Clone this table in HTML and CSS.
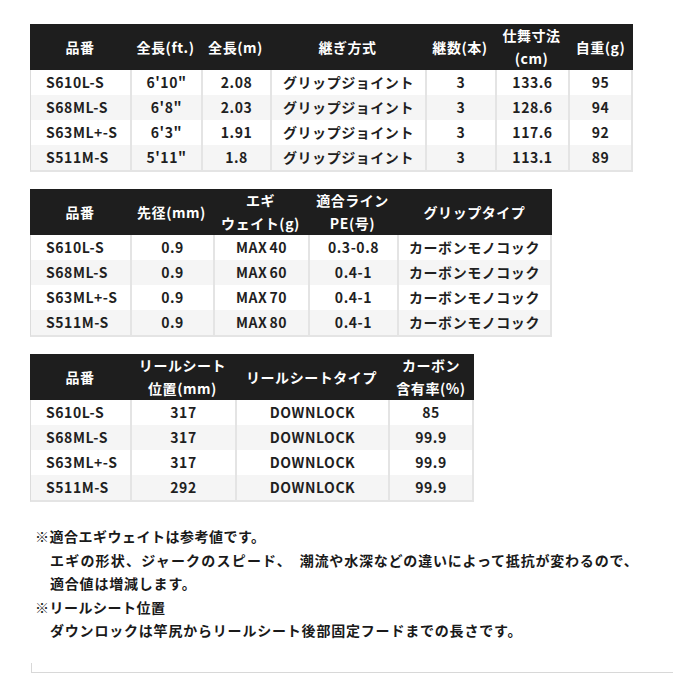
FILE: index.html
```html
<!DOCTYPE html>
<html lang="ja">
<head>
<meta charset="utf-8">
<title>スペック表</title>
<link rel="stylesheet" href="styles.css">
</head>
<body>
<div class="page">
  <table class="spec t1">
    <colgroup>
      <col class="w100"><col class="w71"><col class="w69"><col class="w155"><col class="w70"><col class="w73"><col class="w65">
    </colgroup>
    <thead>
      <tr><th>品番</th><th>全長(ft.)</th><th>全長(m)</th><th>継ぎ方式</th><th>継数(本)</th><th>仕舞寸法<br>(cm)</th><th>自重(g)</th></tr>
    </thead>
    <tbody>
      <tr><td>S610L-S</td><td>6'10"</td><td>2.08</td><td>グリップジョイント</td><td>3</td><td>133.6</td><td>95</td></tr>
      <tr><td>S68ML-S</td><td>6'8"</td><td>2.03</td><td>グリップジョイント</td><td>3</td><td>128.6</td><td>94</td></tr>
      <tr><td>S63ML+-S</td><td>6'3"</td><td>1.91</td><td>グリップジョイント</td><td>3</td><td>117.6</td><td>92</td></tr>
      <tr><td>S511M-S</td><td>5'11"</td><td>1.8</td><td>グリップジョイント</td><td>3</td><td>113.1</td><td>89</td></tr>
    </tbody>
  </table>

  <table class="spec t2">
    <colgroup>
      <col class="w100"><col class="w83"><col class="w95"><col class="w89"><col class="w155">
    </colgroup>
    <thead>
      <tr><th>品番</th><th>先径(mm)</th><th>エギ<br>ウェイト(g)</th><th>適合ライン<br>PE(号)</th><th>グリップタイプ</th></tr>
    </thead>
    <tbody>
      <tr><td>S610L-S</td><td>0.9</td><td>MAX<span class="thin"> </span>40</td><td>0.3-0.8</td><td>カーボンモノコック</td></tr>
      <tr><td>S68ML-S</td><td>0.9</td><td>MAX<span class="thin"> </span>60</td><td>0.4-1</td><td>カーボンモノコック</td></tr>
      <tr><td>S63ML+-S</td><td>0.9</td><td>MAX<span class="thin"> </span>70</td><td>0.4-1</td><td>カーボンモノコック</td></tr>
      <tr><td>S511M-S</td><td>0.9</td><td>MAX<span class="thin"> </span>80</td><td>0.4-1</td><td>カーボンモノコック</td></tr>
    </tbody>
  </table>

  <table class="spec t3">
    <colgroup>
      <col class="w100"><col class="w105"><col class="w153"><col class="w86">
    </colgroup>
    <thead>
      <tr><th>品番</th><th>リールシート<br>位置(mm)</th><th>リールシートタイプ</th><th>カーボン<br>含有率(%)</th></tr>
    </thead>
    <tbody>
      <tr><td>S610L-S</td><td>317</td><td>DOWNLOCK</td><td>85</td></tr>
      <tr><td>S68ML-S</td><td>317</td><td>DOWNLOCK</td><td>99.9</td></tr>
      <tr><td>S63ML+-S</td><td>317</td><td>DOWNLOCK</td><td>99.9</td></tr>
      <tr><td>S511M-S</td><td>292</td><td>DOWNLOCK</td><td>99.9</td></tr>
    </tbody>
  </table>

  <div class="notes">
    <p class="note-head">※適合エギウェイトは参考値です。</p>
    <p class="note-body"><span class="wide">エギの形状、ジャークのスピード、</span>　潮流や水深などの違いによって抵抗が変わるので、</p>
    <p class="note-body">適合値は増減します。</p>
    <p class="note-head">※リールシート位置</p>
    <p class="note-body">ダウンロックは竿尻からリールシート後部固定フードまでの長さです。</p>
  </div>

  <div class="next-box"></div>
</div>
</body>
</html>
```

FILE: styles.css
```css
html, body {
  margin: 0;
  padding: 0;
  background: #ffffff;
}

body {
  font-family: "Noto Sans CJK JP", "Noto Sans", sans-serif;
  color: #1f1f1f;
  overflow: hidden;
}

.page {
  padding: 24px 0 0 30px;
}

.spec {
  border-collapse: separate;
  border-spacing: 0;
  table-layout: fixed;
  font-size: 14px;
  font-weight: 700;
  letter-spacing: 0.55px;
  margin: 0 0 17px 0;
}

.t1 { width: 603px; }
.t2 { width: 522px; }
.t3 { width: 444px; }

.w100 { width: 100px; }
.w71 { width: 71px; }
.w69 { width: 69px; }
.w155 { width: 155px; }
.w70 { width: 70px; }
.w73 { width: 73px; }
.w65 { width: 65px; }
.w83 { width: 83px; }
.w95 { width: 95px; }
.w89 { width: 89px; }
.w105 { width: 105px; }
.w153 { width: 153px; }
.w86 { width: 86px; }

.thin {
  letter-spacing: -1px;
}

.spec th {
  background: #1e1e1e;
  color: #ffffff;
  height: 46px;
  padding: 0;
  line-height: 23px;
  font-weight: 700;
  text-align: center;
  vertical-align: middle;
  white-space: nowrap;
}

.spec td {
  height: 25px;
  padding: 0;
  line-height: 25px;
  text-align: center;
  vertical-align: middle;
  white-space: nowrap;
  background: #ffffff;
  border-left: 2px solid #e4e4e4;
}

.spec td:first-child {
  text-align: left;
  padding-left: 15px;
  border-left: 1px solid #dcdcdc;
}

.spec td:last-child {
  border-right: 2px solid #e4e4e4;
}

.spec tbody tr:nth-child(even) td {
  background: #f5f5f5;
}

.spec tbody tr:last-child td {
  border-bottom: 2px solid #e4e4e4;
}

.notes {
  margin-top: 23px;
  padding-left: 5px;
  font-size: 14px;
  font-weight: 700;
  letter-spacing: 0.5px;
  line-height: 23.5px;
  color: #1a1a1a;
}

.notes p {
  margin: 0;
  white-space: nowrap;
}

.note-body {
  padding-left: 15px;
  letter-spacing: 0.8px;
}

.note-body .wide {
  letter-spacing: 1.2px;
}

.next-box {
  margin-top: 20px;
  margin-left: 1px;
  height: 9px;
  border-left: 1px solid #d8d8d8;
  border-bottom: 1px solid #d8d8d8;
}
```
